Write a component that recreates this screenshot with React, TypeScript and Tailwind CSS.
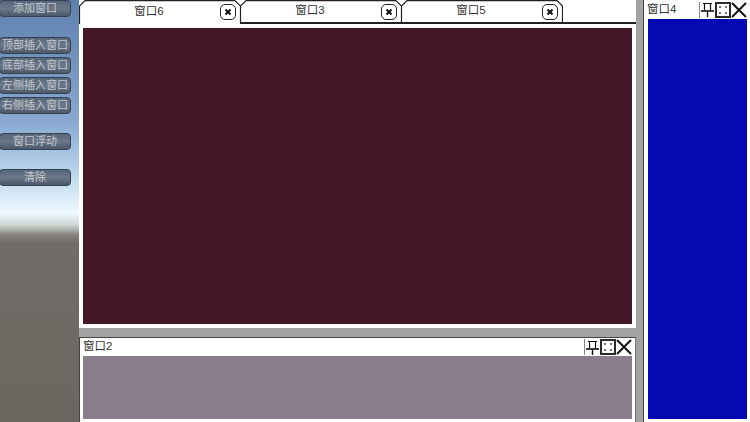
import type { ReactNode } from 'react';

const font = "font-['Liberation_Sans','Noto_Sans_CJK_SC',sans-serif]";

function SideButton({ label, className = '' }: { label: string; className?: string }) {
  return (
    <div
      className={`h-[17px] w-[72px] -ml-px shrink-0 flex items-center justify-center rounded-[4px] border border-[#36424f] bg-gradient-to-b from-[#56667c] via-[#6b7888] to-[#4a586a] text-[11px] leading-none text-[#c4c8cc] ${className}`}
    >
      {label}
    </div>
  );
}

function Tab({ label, active = false }: { label: string; active?: boolean }) {
  return (
    <div className={`relative w-[162px] h-[24px] -mr-px flex items-center ${active ? 'bg-white' : 'border-b-2 border-[#222]'}`}>
      <svg className="absolute left-0 top-0" width="162" height="24" viewBox="0 0 162 24" fill="none" stroke="#222" strokeWidth="1.2">
        <path d="M.5 24V6L6 .6H156L161.5 6V24" />
      </svg>
      <span className="flex-1 text-center text-[11.5px] leading-none text-[#333] pr-[22px]">{label}</span>
      <span className="absolute right-[5px] top-[4px] w-4 h-4 rounded-[5px] border border-[#222] flex items-center justify-center">
        <svg width="8" height="8" viewBox="0 0 8 8">
          <path d="M1.5 1.5 6.5 6.5M6.5 1.5 1.5 6.5" stroke="#111" strokeWidth="2" />
        </svg>
      </span>
    </div>
  );
}

function IconBox({ children, className = '' }: { children: ReactNode; className?: string }) {
  return <span className={`w-4 h-4 flex items-center justify-center ${className}`}>{children}</span>;
}

function WindowButtons() {
  return (
    <div className="flex">
      <IconBox className="border-l border-[#888]">
        <svg width="15" height="15" viewBox="0 0 15 15" fill="none" stroke="#111">
          <path d="M3 1.5h9M4.5 1.5v7M10.5 1.5v7" strokeWidth="1.2" />
          <path d="M1 9h13" strokeWidth="1.6" />
          <path d="M7.5 9v6" strokeWidth="1.4" />
        </svg>
      </IconBox>
      <IconBox className="border-2 border-[#2a2a2a]">
        <svg width="12" height="12" viewBox="0 0 12 12" fill="#777">
          <rect x="2" y="2" width="2" height="2" />
          <rect x="8" y="2" width="2" height="2" />
          <rect x="2" y="8" width="2" height="2" />
          <rect x="8" y="8" width="2" height="2" />
        </svg>
      </IconBox>
      <IconBox>
        <svg width="16" height="16" viewBox="0 0 16 16" fill="none" stroke="#111" strokeWidth="2">
          <path d="M1 1 15 15M15 1 1 15" />
        </svg>
      </IconBox>
    </div>
  );
}

export default function App() {
  return (
    <div className={`${font} w-[750px] h-[422px] overflow-hidden flex bg-[#a3a3a3]`}>
      <aside className="w-[79px] h-full shrink-0 flex flex-col bg-[linear-gradient(to_bottom,#5f7fad_0px,#88a8d2_120px,#b5d2ea_170px,#eefaff_213px,#cfd6d2_225px,#85837e_235px,#716c67_243px,#6b665f_422px)]">
        <SideButton label="添加窗口" className="mb-[20px]" />
        <SideButton label="顶部插入窗口" className="mb-[3px]" />
        <SideButton label="底部插入窗口" className="mb-[3px]" />
        <SideButton label="左侧插入窗口" className="mb-[3px]" />
        <SideButton label="右侧插入窗口" className="mb-[19px]" />
        <SideButton label="窗口浮动" className="mb-[19px]" />
        <SideButton label="清除" />
      </aside>

      <main className="w-[557px] h-full shrink-0 flex flex-col">
        <section className="h-[328px] bg-white flex flex-col">
          <div className="h-[24px] flex shrink-0">
            <Tab label="窗口6" active />
            <Tab label="窗口3" />
            <Tab label="窗口5" />
            <div className="flex-1 border-b-2 border-[#222]" />
          </div>
          <div className="ml-1 mt-1 mb-1 w-[549px] flex-1 bg-[#461729]" />
        </section>
        <section className="mt-[9px] flex-1 bg-white border-t border-x border-[#444] border-r-[#777] flex flex-col">
          <div className="h-[18px] shrink-0 flex items-center justify-between pl-[3px] pr-[3px]">
            <span className="text-[11.5px] leading-none text-[#333]">窗口2</span>
            <WindowButtons />
          </div>
          <div className="ml-[3px] w-[549px] h-[63px] bg-[#8a7e8c]" />
        </section>
      </main>

      <section className="ml-[7px] w-[107px] h-full shrink-0 bg-white border-l border-[#444] flex flex-col">
        <div className="h-[19px] shrink-0 flex items-center justify-between pl-[3px] pr-[3px]">
          <span className="text-[11.5px] leading-none text-[#333]">窗口4</span>
          <WindowButtons />
        </div>
        <div className="ml-[4px] w-[99px] h-[400px] bg-[#0509b2]" />
      </section>
    </div>
  );
}
